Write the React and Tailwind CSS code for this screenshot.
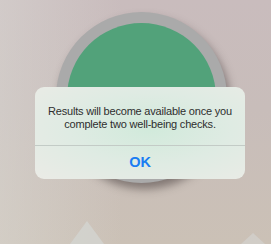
export default function App() {
  return (
    <div className="relative w-[271px] h-[244px] overflow-hidden bg-[linear-gradient(180deg,#c9bcbd_0%,#c8bdba_45%,#cbc1b6_100%)] font-['Helvetica_Neue','Liberation_Sans',Arial,sans-serif]">
      {/* soft light haze on the left */}
      <div className="absolute inset-0 bg-[linear-gradient(90deg,rgba(220,220,215,0.45)_0%,rgba(220,220,215,0)_45%)]" />

      {/* background triangles */}
      <svg className="absolute left-0 top-0" width="271" height="244" viewBox="0 0 271 244">
        <polygon points="87,221 70,244 104,244" fill="#d3d5d1" opacity="0.8" />
        <polygon points="253,233 241,244 265,244" fill="#d3d2cf" opacity="0.7" />
      </svg>

      {/* ring + green disc */}
      <div className="absolute left-[56px] top-[12px] w-[171px] h-[171px] rounded-full bg-[#aaaaaa] shadow-[3px_6px_8px_rgba(60,50,50,0.5)] p-[11px]">
        <div className="w-full h-full rounded-full bg-[#52a27a]" />
      </div>

      {/* alert */}
      <div className="absolute left-[35px] top-[87px] w-[210px] h-[92px] rounded-[9px] overflow-hidden bg-[radial-gradient(ellipse_at_55%_45%,#d1eadb_0%,#dfebe3_50%,#ebebe6_100%)] flex flex-col">
        <div className="h-[58px] flex items-center justify-center pt-[3px]">
          <p className="text-center text-[11px] leading-[13px] tracking-[-0.2px] text-[#2e2e2e] whitespace-nowrap">
            Results will become available once you
            <br />
            complete two well-being checks.
          </p>
        </div>
        <div className="h-px bg-[#c3cbc6]" />
        <div className="flex-1 flex items-center justify-center">
          <span className="text-[14.5px] font-semibold text-[#1a7df3]">OK</span>
        </div>
      </div>
    </div>
  );
}
